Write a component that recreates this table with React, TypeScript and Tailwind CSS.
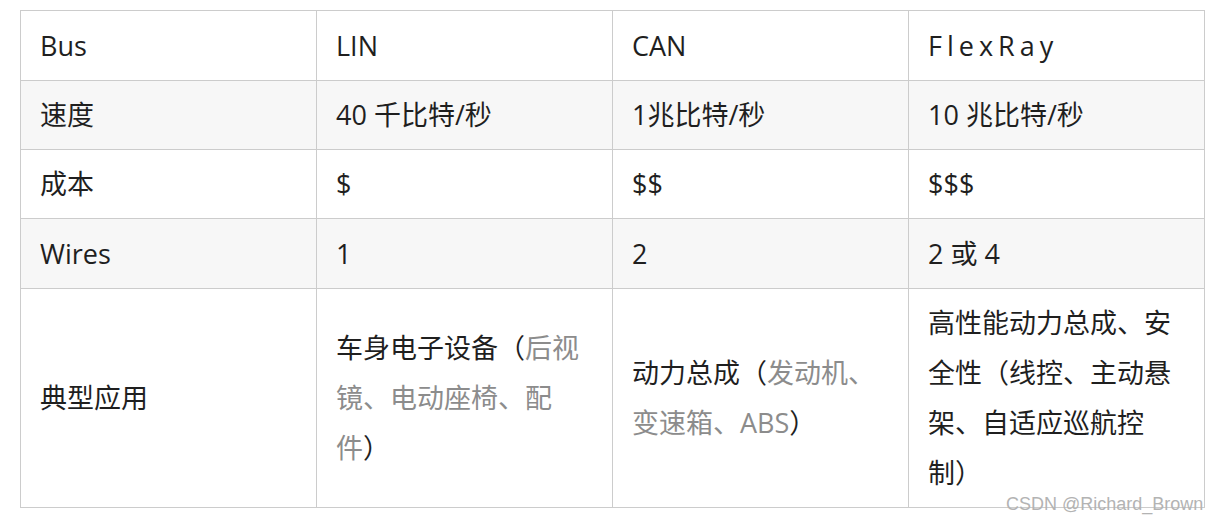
import React from 'react';

const cell = 'border border-[#cccccc] px-[19px] py-[9px] align-middle';

export default function App() {
  return (
    <div
      className="relative w-[1214px] h-[521px] bg-white text-[#1f1f1f] text-[27px] leading-[50px]"
      style={{ fontFamily: '"Open Sans", "Noto Sans CJK SC", sans-serif' }}
    >
      <div className="pt-[10px] pl-[20px]">
        <table className="table-fixed border-collapse w-[1184px]">
          <colgroup>
            <col className="w-[296px]" />
            <col className="w-[296px]" />
            <col className="w-[296px]" />
            <col className="w-[296px]" />
          </colgroup>
          <tbody>
            {/* Header */}
            <tr className="bg-white">
              <td className={`${cell} pt-[10px]`}>Bus</td>
              <td className={`${cell} pt-[10px]`}>LIN</td>
              <td className={`${cell} pt-[10px]`}>CAN</td>
              <td className={`${cell} pt-[10px]`}>
                <span className="tracking-[5px]">FlexRay</span>
              </td>
            </tr>

            <tr className="bg-[#f7f7f7]">
              <td className={cell}>速度</td>
              <td className={cell}>40 千比特/秒</td>
              <td className={cell}>1兆比特/秒</td>
              <td className={cell}>10 兆比特/秒</td>
            </tr>

            <tr className="bg-white">
              <td className={cell}>成本</td>
              <td className={cell}>$</td>
              <td className={cell}>$$</td>
              <td className={cell}>$$$</td>
            </tr>

            <tr className="bg-[#f7f7f7]">
              <td className={`${cell} pt-[10px]`}>Wires</td>
              <td className={`${cell} pt-[10px]`}>1</td>
              <td className={`${cell} pt-[10px]`}>2</td>
              <td className={`${cell} pt-[10px]`}>2 或 4</td>
            </tr>

            {/* Typical applications */}
            <tr className="bg-white">
              <td className={cell}>典型应用</td>
              <td className={cell}>
                车身电子设备（<span className="text-[#8c8c8c]">后视<br />镜、电动座椅、配<br />件</span>）
              </td>
              <td className={cell}>
                动力总成（<span className="text-[#8c8c8c]">发动机、<br />变速箱、ABS</span>）
              </td>
              <td className={cell}>
                高性能动力总成、安<br />全性（线控、主动悬<br />架、自适应巡航控<br />制）
              </td>
            </tr>
          </tbody>
        </table>
      </div>

      {/* Watermark */}
      <div
        className="absolute left-[1006px] top-[494px] text-[18px] leading-[20px] text-[#b3b3b3] whitespace-nowrap"
        style={{ fontFamily: '"Liberation Sans", Arial, sans-serif' }}
      >
        CSDN @Richard_Brown
      </div>
    </div>
  );
}
